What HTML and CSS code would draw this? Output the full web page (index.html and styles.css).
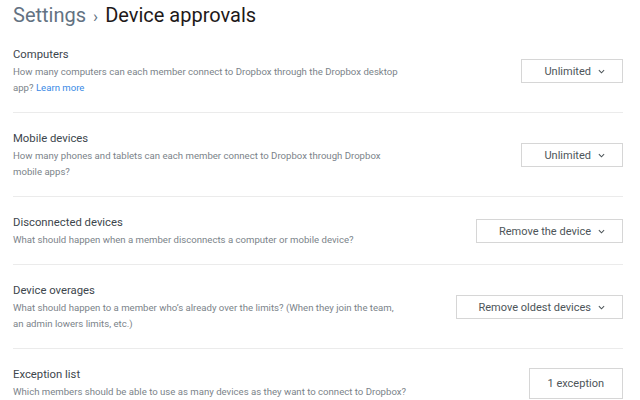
FILE: index.html
```html
<!DOCTYPE html>
<html>
<head>
<meta charset="utf-8">
<link rel="stylesheet" href="styles.css">
</head>
<body>
<div class="page">
  <h1 class="title"><span class="crumb">Settings</span><span class="sep">›</span><span class="current">Device approvals</span></h1>
  <div class="list">
    <div class="row">
      <div class="info">
        <div class="label">Computers</div>
        <div class="desc">How many computers can each member connect to Dropbox through the Dropbox desktop<br>app? <a class="link" href="#">Learn more</a></div>
      </div>
      <button class="drop">Unlimited <svg class="chev" viewBox="0 0 8 5" width="7" height="5"><path d="M1 1l3 3 3-3" fill="none" stroke="currentColor" stroke-width="1.2"/></svg></button>
    </div>
    <div class="row">
      <div class="info">
        <div class="label">Mobile devices</div>
        <div class="desc">How many phones and tablets can each member connect to Dropbox through Dropbox<br>mobile apps?</div>
      </div>
      <button class="drop">Unlimited <svg class="chev" viewBox="0 0 8 5" width="7" height="5"><path d="M1 1l3 3 3-3" fill="none" stroke="currentColor" stroke-width="1.2"/></svg></button>
    </div>
    <div class="row">
      <div class="info">
        <div class="label">Disconnected devices</div>
        <div class="desc">What should happen when a member disconnects a computer or mobile device?</div>
      </div>
      <button class="drop">Remove the device <svg class="chev" viewBox="0 0 8 5" width="7" height="5"><path d="M1 1l3 3 3-3" fill="none" stroke="currentColor" stroke-width="1.2"/></svg></button>
    </div>
    <div class="row">
      <div class="info">
        <div class="label">Device overages</div>
        <div class="desc">What should happen to a member who’s already over the limits? (When they join the team,<br>an admin lowers limits, etc.)</div>
      </div>
      <button class="drop">Remove oldest devices <svg class="chev" viewBox="0 0 8 5" width="7" height="5"><path d="M1 1l3 3 3-3" fill="none" stroke="currentColor" stroke-width="1.2"/></svg></button>
    </div>
    <div class="row last">
      <div class="info">
        <div class="label">Exception list</div>
        <div class="desc">Which members should be able to use as many devices as they want to connect to Dropbox?</div>
      </div>
      <button class="drop tall">1 exception</button>
    </div>
  </div>
</div>
</body>
</html>
```
FILE: styles.css
```css
* { box-sizing: border-box; }
html, body { margin: 0; background: #fff; }
body { font-family: Roboto, "Liberation Sans", sans-serif; color: #3d464d; }
.page { padding: 0 17px 0 13px; }
.title {
  margin: 0;
  padding-top: 4px;
  height: 30px;
  font-size: 20px;
  font-weight: 400;
  line-height: 22px;
  color: #1e1919;
}
.crumb { color: #637282; }
.sep { color: #637282; margin: 0 7px; font-size: 17px; }
.list { padding-top: 16px; }
.row {
  display: flex;
  align-items: center;
  justify-content: space-between;
  padding: 17px 0 16px;
  border-bottom: 1px solid #ebebeb;
}
.row:first-child { padding-top: 0; }
.row.last { border-bottom: none; }
.info { width: 430px; white-space: nowrap; }
.label { font-size: 11.3px; line-height: 18px; color: #3d464d; }
.desc { font-size: 9.6px; line-height: 16px; color: #7b838a; }
.link { color: #3b8ae6; text-decoration: none; }
.drop {
  font-family: inherit;
  font-size: 11px;
  color: #4d5559;
  background: #fff;
  border: 1px solid #d6d6d6;
  height: 24px;
  padding: 0 17px 0 22px;
  display: flex;
  align-items: center;
  gap: 7px;
  flex-shrink: 0;
}
.drop.tall { height: 31px; padding: 0 18px; }
.chev { display: block; }
```
